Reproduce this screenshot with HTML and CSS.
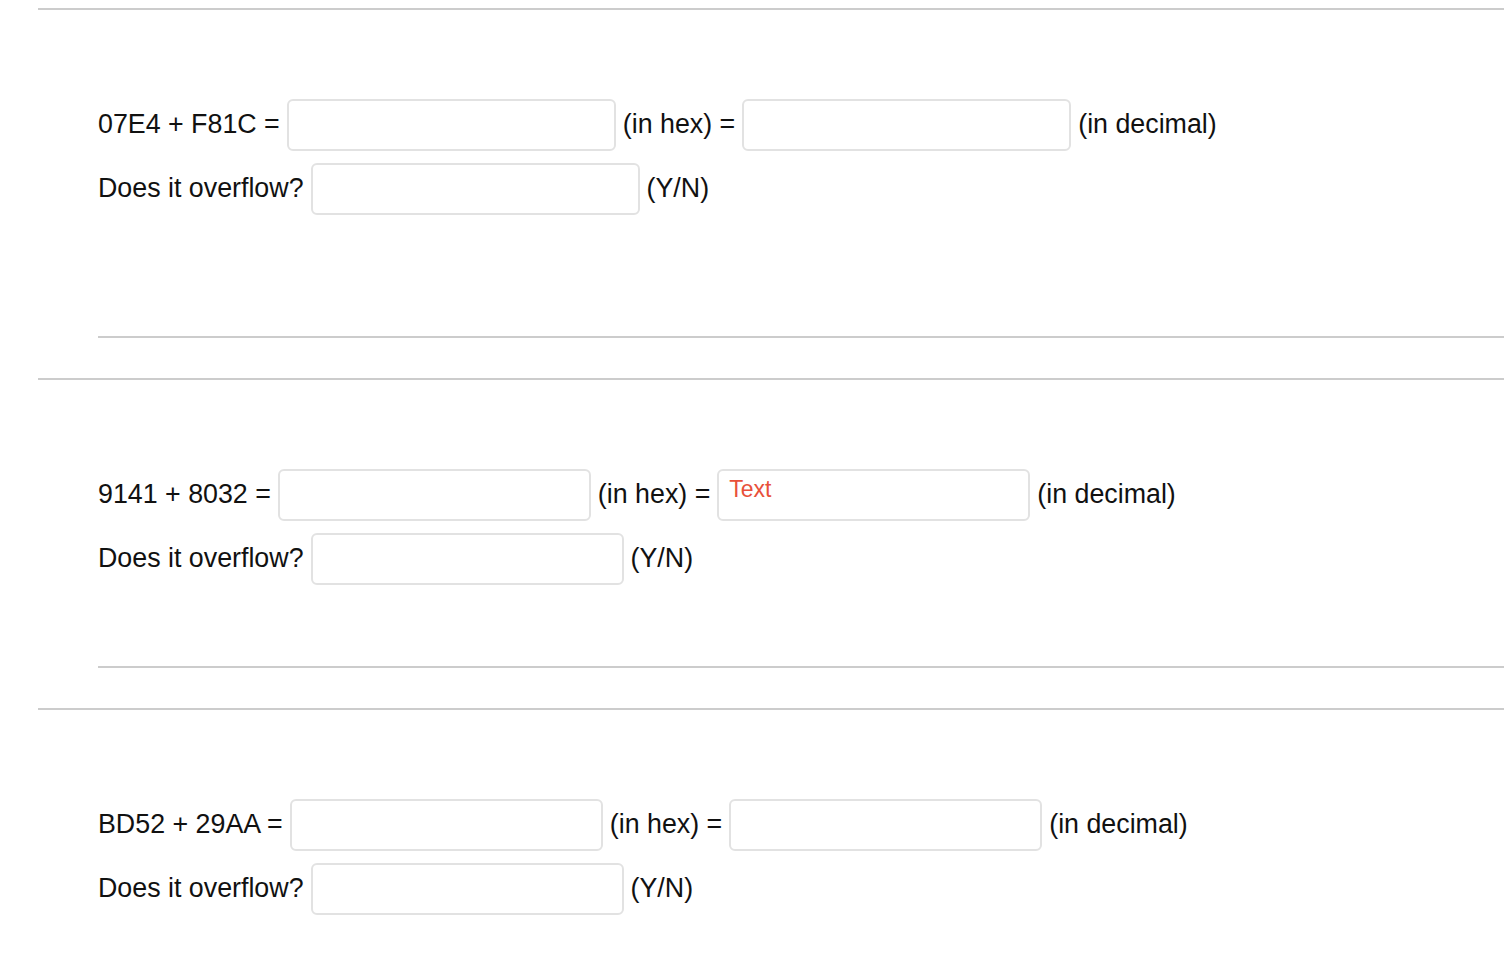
FILE: index.html
```html
<!DOCTYPE html>
<html lang="en">
<head>
<meta charset="utf-8">
<title>Hex addition</title>
<link rel="stylesheet" href="styles.css">
</head>
<body>
<div class="page">
  <section class="problem">
    <div class="row">
      <span class="label">07E4 + F81C =</span>
      <input class="field wide" type="text">
      <span class="label">(in hex) =</span>
      <input class="field wide" type="text">
      <span class="label">(in decimal)</span>
    </div>
    <div class="row">
      <span class="label">Does it overflow?</span>
      <input class="field wide" type="text">
      <span class="label">(Y/N)</span>
    </div>
    <hr class="divider">
  </section>
  <section class="problem">
    <div class="row">
      <span class="label">9141 + 8032 =</span>
      <input class="field" type="text">
      <span class="label">(in hex) =</span>
      <input class="field field-error" type="text" value="Text">
      <span class="label">(in decimal)</span>
    </div>
    <div class="row">
      <span class="label">Does it overflow?</span>
      <input class="field" type="text">
      <span class="label">(Y/N)</span>
    </div>
    <hr class="divider compact">
  </section>
  <section class="problem">
    <div class="row">
      <span class="label">BD52 + 29AA =</span>
      <input class="field" type="text">
      <span class="label">(in hex) =</span>
      <input class="field" type="text">
      <span class="label">(in decimal)</span>
    </div>
    <div class="row">
      <span class="label">Does it overflow?</span>
      <input class="field" type="text">
      <span class="label">(Y/N)</span>
    </div>
    <hr class="divider compact">
  </section>
</div>
</body>
</html>
```
FILE: styles.css
```css
html, body {
  margin: 0;
  padding: 0;
  background: #ffffff;
}

body {
  font-family: "Liberation Sans", Arial, Helvetica, sans-serif;
  color: #111111;
  overflow: hidden;
}

.page {
  padding-top: 8px;
  margin-left: 38px;
}

.problem {
  border-top: 2px solid #cccccc;
  padding: 89px 0 40px 60px;
}

.row {
  display: flex;
  align-items: center;
  gap: 7px;
  height: 52px;
  margin-bottom: 12px;
}

.row:last-of-type {
  margin-bottom: 0;
}

.label {
  font-size: 26.8px;
  white-space: nowrap;
  line-height: 1.15;
  position: relative;
  top: -1px;
}

.field {
  box-sizing: border-box;
  width: 313px;
  height: 52px;
  border: 2px solid #e2e2e2;
  border-radius: 6px;
  background: #ffffff;
  font-family: "Liberation Sans", Arial, Helvetica, sans-serif;
  font-size: 23px;
  padding: 0 10px;
  margin: 0;
  outline: none;
  flex: none;
}

.field.wide {
  width: 329px;
}

.field-error {
  color: #e8503a;
  padding-bottom: 12px;
}

.divider {
  border: 0;
  border-top: 2px solid #cccccc;
  margin: 121px 0 0 0;
  height: 0;
}

.divider.compact {
  margin-top: 81px;
}
```
